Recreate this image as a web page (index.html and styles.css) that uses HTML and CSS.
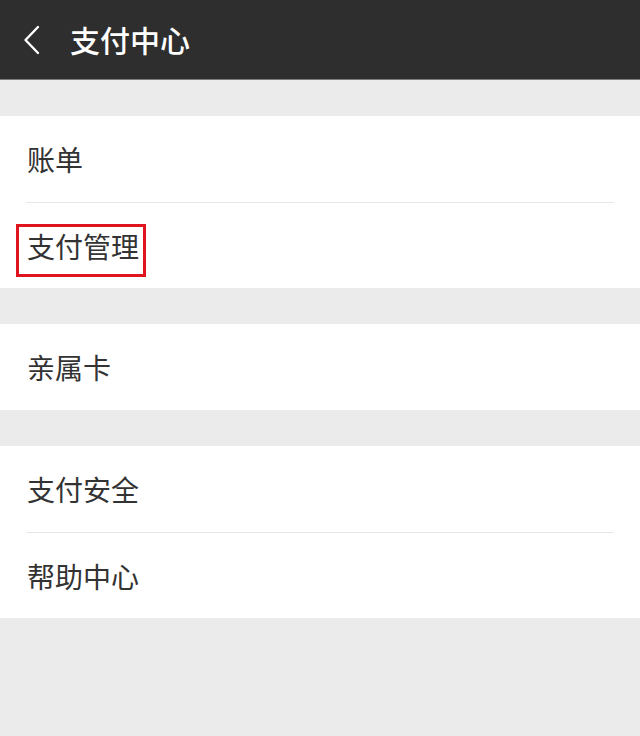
FILE: index.html
```html
<!DOCTYPE html>
<html lang="zh">
<head>
<meta charset="utf-8">
<link rel="stylesheet" href="styles.css">
</head>
<body>
<header class="topbar">
  <svg class="back" width="20" height="30" viewBox="0 0 20 30"><path d="M16 2 L3.5 15 L16 28" fill="none" stroke="#fff" stroke-width="2.4" stroke-linecap="round" stroke-linejoin="round"/></svg>
  <h1 class="title">支付中心</h1>
</header>
<main class="content">
  <section class="group">
    <div class="row">账单</div>
    <div class="row"><span class="mark">支付管理</span></div>
  </section>
  <section class="group">
    <div class="row">亲属卡</div>
  </section>
  <section class="group">
    <div class="row">支付安全</div>
    <div class="row">帮助中心</div>
  </section>
</main>
</body>
</html>
```
FILE: styles.css
```css
html, body {
  margin: 0;
  padding: 0;
  height: 100%;
}
body {
  background: #ebebeb;
  font-family: "Noto Sans CJK SC", "Noto Sans", sans-serif;
}
.topbar {
  height: 80px;
  box-sizing: border-box;
  background: #2e2e2e;
  border-bottom: 1px solid #7a7a7a;
  display: flex;
  align-items: center;
  padding-left: 22px;
}
.back {
  display: block;
  margin-right: 28px;
}
.title {
  margin: 0;
  color: #fff;
  font-size: 30px;
  font-weight: 500;
  line-height: 1;
  margin-top: -2px;
}
.content {
  display: flex;
  flex-direction: column;
  gap: 36px;
  padding-top: 36px;
}
.group {
  background: #fff;
  padding-left: 26px;
  padding-right: 26px;
}
.row {
  height: 86px;
  display: flex;
  align-items: center;
  font-size: 28px;
  color: #333;
  padding-left: 1px;
  box-sizing: border-box;
}
.row + .row {
  border-top: 1px solid #e6e6e6;
}
.mark {
  position: relative;
}
.mark::after {
  content: "";
  position: absolute;
  left: -11px;
  right: -7px;
  top: -2px;
  bottom: -11px;
  border: 3px solid #e0141e;
}
```
